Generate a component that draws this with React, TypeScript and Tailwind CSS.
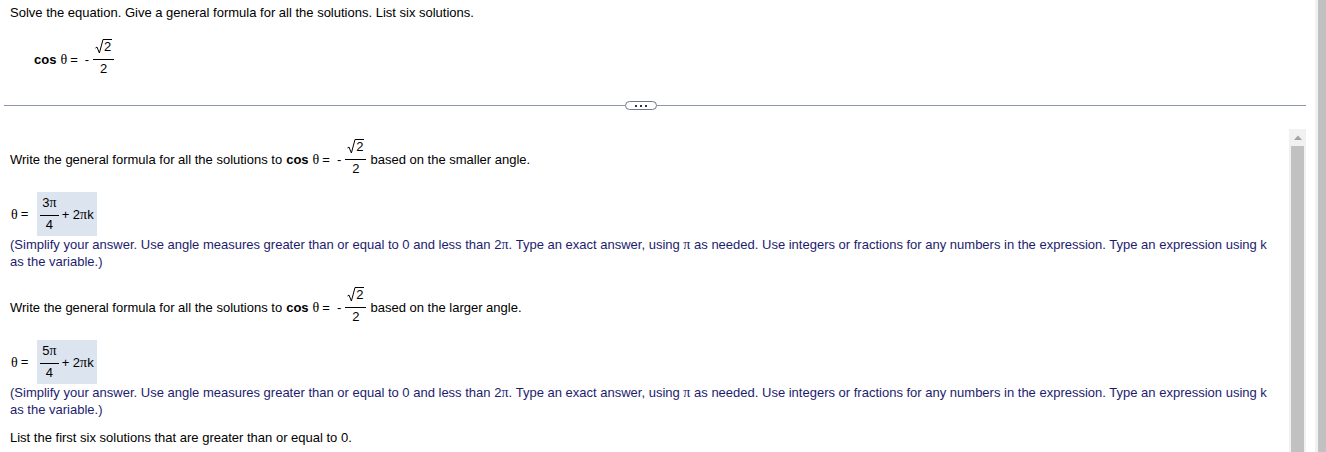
import React from "react";

const Theta = ({ className = "" }: { className?: string }) => (
  <span className={"font-['Liberation_Serif','Times_New_Roman',serif] text-[14px] " + className}>θ</span>
);

const Pi = () => <span className="font-['Liberation_Serif','Times_New_Roman',serif] text-[14px] leading-none">π</span>;

const Sqrt2 = () => (
  <span className="inline-flex items-start">
    <svg width="9" height="15" viewBox="0 0 9 15" className="block">
      <path d="M0.5 9 L2 8.1 L4.4 14 L8 0.5 H9" stroke="#000" strokeWidth="1" fill="none" />
    </svg>
    <span className="border-t border-black leading-[13px] h-[15px] pr-[1px]">2</span>
  </span>
);

const Frac = ({ num, den, className = "" }: { num: React.ReactNode; den: React.ReactNode; className?: string }) => (
  <span className={"inline-flex flex-col items-center " + className}>
    <span className="h-[15px] leading-[15px] flex items-start px-[2px]">{num}</span>
    <span className="h-px self-stretch bg-black mt-[5px]" />
    <span className="leading-[15px] mt-[1px] pb-[4px] px-[2px]">{den}</span>
  </span>
);

const CosEq = () => (
  <>
    <span className="font-bold">cos</span>
    <Theta className="ml-[4px]" />
    <span className="ml-[3px]">=</span>
    <span className="ml-[7px]">-</span>
    <Frac className="ml-[4px]" num={<Sqrt2 />} den={<span>2</span>} />
  </>
);

const Answer = ({ n }: { n: string }) => (
  <div className="flex items-center mt-[12px]">
    <Theta className="ml-[1px]" />
    <span className="ml-[3px]">=</span>
    <div className="ml-[9px] h-[44px] bg-[#dce4f0] flex items-center pl-[3px] pr-[3px] pt-[2px]">
      <Frac
        num={
          <span>
            {n}
            <Pi />
          </span>
        }
        den={<span>4</span>}
      />
      <span className="ml-[3px]">
        + 2<Pi />k
      </span>
    </div>
  </div>
);

const Simplify = () => (
  <p className="text-[#1c1c6e] leading-[17px]">
    (Simplify your answer. Use angle measures greater than or equal to 0 and less than 2
    <Pi />. Type an exact answer, using <Pi /> as needed. Use integers or fractions for any numbers in the
    expression. Type an expression using k as the variable.)
  </p>
);

export default function App() {
  return (
    <div className="flex w-[1326px] h-[452px] overflow-hidden bg-white text-black text-[13px] font-['Liberation_Sans',Arial,sans-serif]">
      <div className="flex-1 flex flex-col pl-[4px] pr-[9px] min-w-0">
        <div className="pl-[6px] pt-[5px]">
          <p className="leading-[16px]">Solve the equation. Give a general formula for all the solutions. List six solutions.</p>
          <div className="flex items-center mt-[18px] ml-[24px] leading-[16px]">
            <CosEq />
          </div>
        </div>
        <div className="flex items-center mt-[21px] h-[9px]">
          <div className="w-[621px] h-px bg-[#8e98aa]" />
          <div className="w-[32px] h-[9px] rounded-full border-[1.5px] border-[#6e7890] bg-white flex items-center justify-center gap-[3px]">
            <span className="w-[2px] h-[2px] bg-[#333]" />
            <span className="w-[2px] h-[2px] bg-[#333]" />
            <span className="w-[2px] h-[2px] bg-[#333]" />
          </div>
          <div className="flex-1 h-px bg-[#8e98aa]" />
        </div>
        <div className="flex-1 flex mt-[19px] min-h-0">
          <div className="flex-1 pl-[6px] pr-[11px] pt-[10px] min-w-0">
            <div className="flex items-center leading-[16px]">
              <span>Write the general formula for all the solutions to</span>
              <span className="ml-[4px] flex items-center">
                <CosEq />
              </span>
              <span className="ml-[4px]">based on the smaller angle.</span>
            </div>
            <Answer n="3" />
            <Simplify />
            <div className="flex items-center leading-[16px] mt-[17px]">
              <span>Write the general formula for all the solutions to</span>
              <span className="ml-[4px] flex items-center">
                <CosEq />
              </span>
              <span className="ml-[4px]">based on the larger angle.</span>
            </div>
            <Answer n="5" />
            <Simplify />
            <p className="leading-[16px] mt-[12px]">List the first six solutions that are greater than or equal to 0.</p>
          </div>
          <div className="w-[17px] bg-[#f1f1f1] flex flex-col">
            <div className="h-[17px] flex items-center justify-center">
              <svg width="8" height="5" viewBox="0 0 8 5">
                <path d="M0 5 L4 0.5 L8 5 Z" fill="#a3a3a3" />
              </svg>
            </div>
            <div className="flex-1 mx-[2px] bg-[#c1c1c1]" />
          </div>
        </div>
      </div>
      <div className="w-[11px] bg-[#f1f1f1] pl-[3px] flex">
        <div className="flex-1 bg-[#c1c1c1]" />
      </div>
    </div>
  );
}
